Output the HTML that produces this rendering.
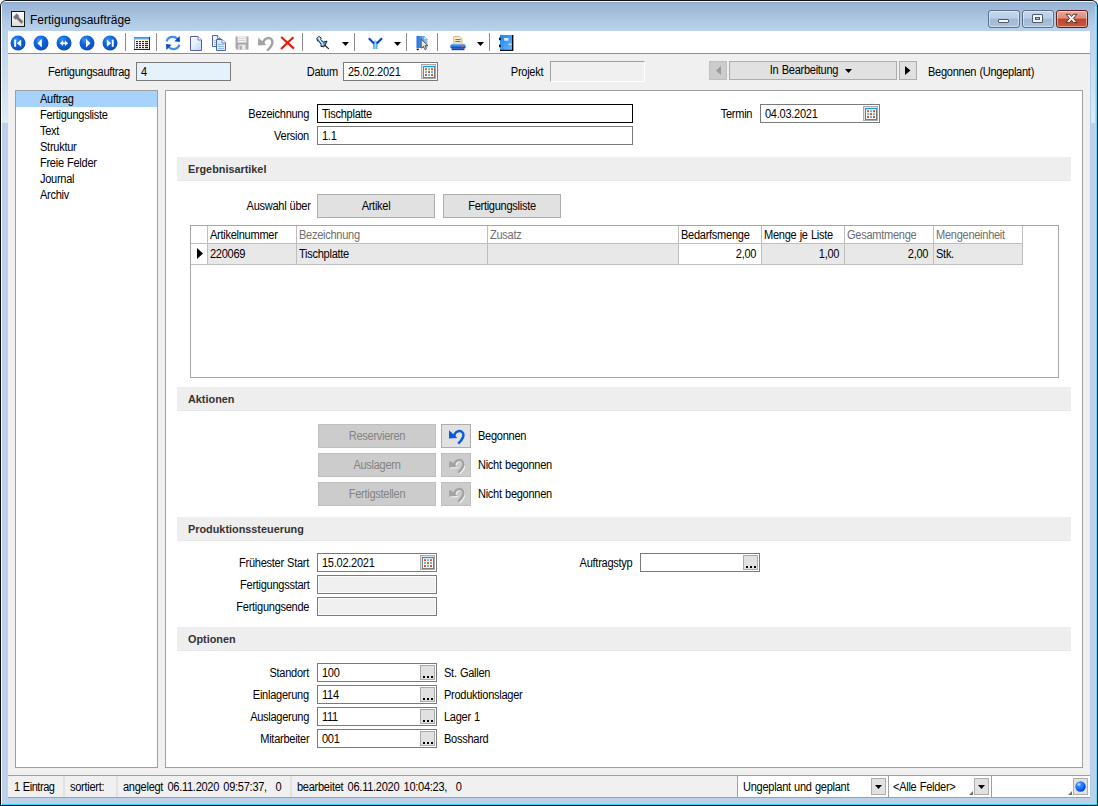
<!DOCTYPE html>
<html>
<head>
<meta charset="utf-8">
<title>Fertigungsaufträge</title>
<style>
*{box-sizing:border-box;margin:0;padding:0}
html,body{width:1098px;height:806px;overflow:hidden;background:#fff}
body{font-family:"Liberation Sans",sans-serif;font-size:11px;color:#000;position:relative}
.win div,.win span,.win svg,.win i{position:absolute}
.win{position:absolute;left:0;top:0;width:1098px;height:806px;background:#bbd2ea;overflow:hidden;border-radius:6px 6px 0 0}
.t{white-space:nowrap;font-size:12px;line-height:12px;letter-spacing:-0.3px;word-spacing:.5px;height:12px;margin-top:.4px;transform:scaleX(.92);transform-origin:0 50%}
.r{text-align:right;transform-origin:100% 50%}
.inp{border:1px solid #7a7a7a;background:#fff;height:19px}
.inp .t{left:4px;top:3px}
.dis{background:#f0f0f0;box-shadow:inset 0 0 0 1px #fbfbfb}
.btn{border:1px solid #adadad;background:#e1e1e1}
.btn .t{left:0;right:0;top:5px;text-align:center;transform-origin:50% 50%}
.btnd{border:1px solid #bfbfbf;background:#cccccc;color:#838383}
.btnd .t{left:0;right:0;top:5px;text-align:center;transform-origin:50% 50%}
.hdr{left:177px;width:894px;height:24px;background:#eee;border-bottom:1px solid #e6e8ea}
.hdr .t{left:11px;top:5px;font-weight:bold;font-size:11.8px;color:#333;letter-spacing:0;line-height:14px;height:14px;transform:scaleX(.92)}
.dots{border:1px solid #a9a9a9;background:#e1e1e1;width:15px;height:15px}
.dots i{bottom:1px;width:2px;height:2px;background:#000}
.cal{width:15px;height:15px;border:1px solid #8e8f8f;background:#ececec}
.sep{top:33px;width:1px;height:18px;background:#8c8c8c}
.gl{background:#bebebe}
</style>
</head>
<body>
<div class="win">
<div style="left:0;top:0;width:1098px;height:31px;background:linear-gradient(#8fabcd 0,#8fabcd 3px,#99b4d5 4px,#9fbad9 9px,#b0c9e4 21px,#bad2ea 31px)"></div>
<div style="left:0;top:31px;width:8px;height:775px;background:#bbd2ea"></div>
<div style="left:1090px;top:31px;width:8px;height:775px;background:#bbd2ea"></div>
<div style="left:0;top:798px;width:1098px;height:8px;background:#bbd2ea"></div>
<div style="left:2px;top:31px;width:6px;height:92px;background:linear-gradient(rgba(255,255,255,0),rgba(255,255,255,.55))"></div>
<div style="left:1091px;top:31px;width:5px;height:92px;background:linear-gradient(rgba(255,255,255,0),rgba(255,255,255,.55))"></div>
<div style="left:1090px;top:31px;width:1px;height:767px;background:#b4ceea"></div>
<div style="left:1095px;top:6px;width:1px;height:798px;background:#c4d1ea"></div>
<div style="left:1096px;top:3px;width:1px;height:802px;background:#55ddff"></div>
<div style="left:1px;top:804px;width:1096px;height:1px;background:#2fd5f2"></div>
<div style="left:1px;top:1px;width:1095px;height:810px;border:1px solid rgba(255,255,255,.92);border-right:0;border-radius:4px 4px 0 0"></div>
<div style="left:0;top:0;width:1098px;height:806px;border:1px solid #111;border-radius:6px 6px 0 0;box-shadow:0 0 0 8px #fff"></div>
<div style="left:8px;top:31px;width:1082px;height:767px;background:#f0f0f0"></div>
<svg style="left:11px;top:11px" width="14" height="16" viewBox="0 0 14 16">
<defs><linearGradient id="ig" x1="0" y1="0" x2="0" y2="1"><stop offset="0" stop-color="#fff"/><stop offset="1" stop-color="#dcdcdc"/></linearGradient></defs>
<rect x="0.5" y="0.5" width="13" height="15" fill="url(#ig)" stroke="#1a1a1a"/>
<path d="M2.4 6 L5.8 2.8 L8 5 L7.3 6 L12 10.6 L10.4 12.4 L5.6 7.8 L4.6 8.4 Z" fill="#757575" stroke="#808080" stroke-width=".7" stroke-linejoin="round"/>
</svg>
<div class="t" style="left:30px;top:11.6px;font-size:12px;line-height:16px;height:16px;letter-spacing:0;transform:none">Fertigungsaufträge</div>
<div style="left:988px;top:10px;width:32px;height:18px;border:1px solid #5a6f8a;border-radius:3px;background:linear-gradient(#c4d7ec 0,#b9cee7 45%,#9fb9d8 50%,#a9c2de 100%);box-shadow:inset 0 0 0 1px rgba(255,255,255,.45)"></div>
<div style="left:1022px;top:10px;width:32px;height:18px;border:1px solid #5a6f8a;border-radius:3px;background:linear-gradient(#c4d7ec 0,#b9cee7 45%,#9fb9d8 50%,#a9c2de 100%);box-shadow:inset 0 0 0 1px rgba(255,255,255,.45)"></div>
<div style="left:1056px;top:10px;width:32px;height:18px;border:1px solid #5c1f22;border-radius:3px;background:linear-gradient(#e9a99a 0,#dc8b79 45%,#c1452a 50%,#c85a3c 100%);box-shadow:inset 0 0 0 1px rgba(255,255,255,.45)"></div>
<div style="left:998px;top:19px;width:11px;height:4px;background:#f4f6f9;border:1px solid #50586a;border-radius:1px"></div>
<div style="left:1032px;top:14px;width:11px;height:9px;background:#f4f6f9;border:1px solid #50586a;border-radius:1px"></div>
<div style="left:1035px;top:17px;width:5px;height:3px;background:#a9bfdb;border:1px solid #50586a"></div>
<svg style="left:1065px;top:13px" width="13" height="11" viewBox="0 0 13 11"><path d="M1 1.3 L4.6 1.3 L6.5 3.5 L8.4 1.3 L12 1.3 L8.5 5.3 L12 9.6 L8.4 9.6 L6.5 7.2 L4.6 9.6 L1 9.6 L4.5 5.3 Z" fill="#f7f7f7" stroke="#4e3436" stroke-width="1" stroke-linejoin="round"/></svg>
<div style="left:8px;top:31px;width:1082px;height:22px;background:#fff"></div>
<div style="left:8px;top:53px;width:1082px;height:1px;background:#8e8e8e"></div>
<svg style="left:0;top:0" width="0" height="0"><defs>
<radialGradient id="ball" cx="0.38" cy="0.3" r="0.75"><stop offset="0" stop-color="#3a93f7"/><stop offset="0.45" stop-color="#0d63dc"/><stop offset="0.85" stop-color="#0a52c4"/><stop offset="1" stop-color="#0a3f9e"/></radialGradient>
</defs></svg>
<svg style="left:9.9px;top:35px" width="16" height="16" viewBox="0 0 16 16"><circle cx="8" cy="8" r="7.5" fill="url(#ball)"/><rect x="4.2" y="4.6" width="1.9" height="7.2" fill="#fff"/><path d="M6.9 8.2 L11.2 4.6 L11.2 11.8 Z" fill="#fff"/></svg>
<svg style="left:32.9px;top:35px" width="16" height="16" viewBox="0 0 16 16"><circle cx="8" cy="8" r="7.5" fill="url(#ball)"/><path d="M4.4 8.2 L8.8 3.8 L8.8 12.6 Z" fill="#fff"/></svg>
<svg style="left:55.9px;top:35px" width="16" height="16" viewBox="0 0 16 16"><circle cx="8" cy="8" r="7.5" fill="url(#ball)"/><path d="M3.8 8.2 L7.1 5.5 L7.1 7.4 L8.9 7.4 L8.9 5.5 L12.2 8.2 L8.9 10.9 L8.9 9 L7.1 9 L7.1 10.9 Z" fill="#fff"/></svg>
<svg style="left:78.9px;top:35px" width="16" height="16" viewBox="0 0 16 16"><circle cx="8" cy="8" r="7.5" fill="url(#ball)"/><path d="M11.4 8.2 L7 3.8 L7 12.6 Z" fill="#fff"/></svg>
<svg style="left:101.9px;top:35px" width="16" height="16" viewBox="0 0 16 16"><circle cx="8" cy="8" r="7.5" fill="url(#ball)"/><rect x="9.8" y="4.6" width="1.9" height="7.2" fill="#fff"/><path d="M9.1 8.2 L4.8 4.6 L4.8 11.8 Z" fill="#fff"/></svg>
<div class="sep" style="left:125px"></div>
<div class="sep" style="left:156px"></div>
<div class="sep" style="left:302px"></div>
<div class="sep" style="left:354px"></div>
<div class="sep" style="left:406px"></div>
<div class="sep" style="left:437px"></div>
<div class="sep" style="left:489px"></div>
<svg style="left:134px;top:37px" width="16" height="13" viewBox="0 0 16 13">
<defs><linearGradient id="gtb" x1="0" y1="0" x2="0" y2="1"><stop offset="0" stop-color="#2487f4"/><stop offset="1" stop-color="#8ec6fb"/></linearGradient></defs>
<rect x="0" y="0" width="16" height="13" fill="#10207a"/>
<rect x="0" y="0" width="1" height="12" fill="#8c8c98"/>
<rect x="1" y="0" width="14" height="12" fill="#fef8dc"/>
<rect x="0" y="0" width="15" height="2.6" fill="url(#gtb)"/>
<rect x="2" y="4" width="2" height="1.15" fill="#0a0af5"/><rect x="5" y="4" width="2" height="1.15" fill="#0a0af5"/><rect x="8" y="4" width="2" height="1.15" fill="#0a0af5"/><rect x="11" y="4" width="3" height="1.15" fill="#0a0af5"/><rect x="2" y="6" width="2" height="1.15" fill="#0a0af5"/><rect x="5" y="6" width="2" height="1.15" fill="#0a0af5"/><rect x="8" y="6" width="2" height="1.15" fill="#0a0af5"/><rect x="11" y="6" width="3" height="1.15" fill="#0a0af5"/><rect x="2" y="8" width="2" height="1.15" fill="#0a0af5"/><rect x="5" y="8" width="2" height="1.15" fill="#0a0af5"/><rect x="8" y="8" width="2" height="1.15" fill="#0a0af5"/><rect x="11" y="8" width="3" height="1.15" fill="#0a0af5"/><rect x="2" y="10" width="2" height="1.15" fill="#0a0af5"/><rect x="5" y="10" width="2" height="1.15" fill="#0a0af5"/><rect x="8" y="10" width="2" height="1.15" fill="#0a0af5"/><rect x="11" y="10" width="3" height="1.15" fill="#0a0af5"/></svg>
<svg style="left:165px;top:35px" width="16" height="16" viewBox="0 0 16 16">
<path d="M1.6 6.4 C2.4 3.4 5 1.9 7.8 1.9 C9.8 1.9 11.3 2.7 12.4 3.9" fill="none" stroke="#3d8ff6" stroke-width="2.2"/>
<path d="M14.7 0.9 L14.9 6.9 L9.4 6.2 Z" fill="#0c48c4"/>
<path d="M14.4 9.6 C13.6 12.6 11 14.1 8.2 14.1 C6.2 14.1 4.7 13.3 3.6 12.1" fill="none" stroke="#3d8ff6" stroke-width="2.2"/>
<path d="M1.3 15.1 L1.1 9.1 L6.6 9.8 Z" fill="#0c48c4"/>
</svg>
<svg style="left:190px;top:36px" width="12" height="15" viewBox="0 0 12 15">
<defs><linearGradient id="docg" x1="0" y1="0" x2="1" y2="1"><stop offset="0" stop-color="#ffffff"/><stop offset="0.5" stop-color="#e1eefc"/><stop offset="1" stop-color="#b9d6f8"/></linearGradient></defs>
<path d="M0.5 0.5 L8 0.5 L11.5 4 L11.5 14.5 L0.5 14.5 Z" fill="url(#docg)" stroke="#5b5ea6"/>
<path d="M8 0.5 L8 4 L11.5 4" fill="#fff" stroke="#5b5ea6" stroke-width=".8"/>
</svg>
<svg style="left:212px;top:35px" width="14" height="16" viewBox="0 0 14 16">
<path d="M0.5 0.5 L5.5 0.5 L8.5 3.5 L8.5 11.5 L0.5 11.5 Z" fill="#eaf3fe" stroke="#4d63a8"/>
<path d="M5.5 0.5 L5.5 3.5 L8.5 3.5" fill="#fff" stroke="#4d63a8" stroke-width=".8"/>
<path d="M2 5.5 H6 M2 7.5 H5 M2 9.5 H5" stroke="#9cc4f4" stroke-width="1"/>
<path d="M4.5 4.5 L10 4.5 L13.5 8 L13.5 15.5 L4.5 15.5 Z" fill="#dcebfd" stroke="#4d63a8"/>
<path d="M10 4.5 L10 8 L13.5 8" fill="#fff" stroke="#4d63a8" stroke-width=".8"/>
<path d="M6 9.5 H12 M6 11.5 H12 M6 13.5 H12" stroke="#8fbdf3" stroke-width="1"/>
</svg>
<svg style="left:235px;top:36px" width="14" height="14" viewBox="0 0 14 14">
<path d="M0.5 0.5 H13.5 V13.5 H1.5 L0.5 12.5 Z" fill="#a9a9a9"/>
<rect x="2.6" y="0.5" width="8.8" height="6" fill="#f4f4f4"/>
<path d="M3.5 2.5 H10.5 M3.5 4.5 H10.5" stroke="#d2d2d2" stroke-width="1"/>
<rect x="3.4" y="8.6" width="7.2" height="4.9" fill="#e9e9e9"/>
<rect x="4.6" y="9.8" width="2.2" height="3.7" fill="#a9a9a9"/>
</svg>
<svg style="left:257px;top:35px" width="17" height="17" viewBox="0 0 17 17">
<path d="M6.2 8.6 C6.4 4.6 9.4 2.7 12 2.9 C15 3.2 16 6.4 15 9.2 C14 11.8 12.2 13.8 10.2 15.6" fill="none" stroke="#a3a3a3" stroke-width="2.5"/>
<path d="M1 2.3 L1 10.5 L9.4 10.1 Z" fill="#a3a3a3"/><rect x="1.2" y="2.6" width="1.3" height="1.8" fill="#d6e4f4"/>
</svg>
<svg style="left:280px;top:36px" width="15" height="14" viewBox="0 0 15 14">
<path d="M1.2 1 L14 12.6 M13.4 1.2 L1 13" stroke="#e51b0a" stroke-width="2.2" stroke-linecap="butt"/>
</svg>
<svg style="left:315px;top:35px" width="15" height="15" viewBox="0 0 15 15">
<path d="M9.6 10 L13.8 13.8" stroke="#111" stroke-width="1.1"/>
<path d="M1.8 3.5 L3.9 1.4 L6.2 3.1 L5.7 4.3 L8.3 7.1 L12.1 6.1 L9 11.8 L5.9 11.4 L6.1 9.2 L3.6 6 L2.6 6.1 Z" fill="#48a4f7" stroke="#111" stroke-width=".9" stroke-linejoin="round"/>
<path d="M3.1 3.6 L4 2.8 L4.9 3.6 L4.4 4.6 L7.2 8 L7.4 10.2" fill="none" stroke="#d6ecff" stroke-width="1.2"/>
</svg>
<svg style="left:342px;top:42px" width="7" height="4" viewBox="0 0 7 4"><path d="M0 0 H7 L3.5 4 Z" fill="#000"/></svg>
<svg style="left:368px;top:37px" width="15" height="12" viewBox="0 0 15 12">
<defs><linearGradient id="fst" x1="0" y1="0" x2="1" y2="0"><stop offset="0" stop-color="#1e90e6"/><stop offset="0.5" stop-color="#9fe0fa"/><stop offset="1" stop-color="#1e90e6"/></linearGradient></defs>
<path d="M5.2 12 V5.5 L7.3 2.4 L9.4 5.5 V12 Z" fill="url(#fst)"/>
<path d="M0.8 1.2 L6 6.6 M14 1.2 L8.8 6.6" stroke="#0a42ba" stroke-width="2.1"/>
</svg>
<svg style="left:394px;top:42px" width="7" height="4" viewBox="0 0 7 4"><path d="M0 0 H7 L3.5 4 Z" fill="#000"/></svg>
<svg style="left:416px;top:36px" width="14" height="15" viewBox="0 0 14 15">
<defs><linearGradient id="dcg" x1="0" y1="0" x2="1" y2="0"><stop offset="0" stop-color="#1d6fe2"/><stop offset="1" stop-color="#9cc6f6"/></linearGradient></defs>
<path d="M0.5 0 L8 0 L11.5 3.5 L11.5 12 L0.5 12 Z" fill="url(#dcg)"/>
<path d="M8 0 L8 3.5 L11.5 3.5 Z" fill="#e8f2fd" stroke="#7f9fd0" stroke-width=".6"/>
<path d="M5.2 3.2 L5.2 12.2 L7.4 10.3 L8.8 13.6 L10.4 12.9 L9 9.7 L11.8 9.5 Z" fill="#f3e9d0" stroke="#3a3a3a" stroke-width=".8" stroke-linejoin="round"/>
<path d="M0 12.8 H3.6 L1.8 14.6 Z" fill="#000"/>
</svg>
<svg style="left:450px;top:36px" width="16" height="15" viewBox="0 0 16 15">
<defs><linearGradient id="prg" x1="0" y1="0" x2="0" y2="1"><stop offset="0" stop-color="#8ec2f8"/><stop offset="0.45" stop-color="#2f86ee"/><stop offset="1" stop-color="#0c3fb0"/></linearGradient></defs>
<path d="M3.8 0.5 H9.6 L12 2.8 V8.4 H3.8 Z" fill="#fbeec4" stroke="#b8a26a" stroke-width=".7"/>
<path d="M5.3 3.6 H10.5 M5.3 5.6 H10.5" stroke="#3c6fd0" stroke-width="1"/>
<path d="M1.6 7.8 H14.4 L15.6 9.4 V12.2 H0.4 V9.4 Z" fill="url(#prg)"/>
<rect x="1.6" y="12.2" width="12.8" height="2" fill="#1646b4"/>
<rect x="11" y="9.7" width="2.6" height="1.1" fill="#f25a1e"/>
</svg>
<svg style="left:477px;top:42px" width="7" height="4" viewBox="0 0 7 4"><path d="M0 0 H7 L3.5 4 Z" fill="#000"/></svg>
<svg style="left:499px;top:35px" width="15" height="16" viewBox="0 0 15 16">
<defs><linearGradient id="bkg" x1="0" y1="0" x2="1" y2="1"><stop offset="0" stop-color="#1a82f2"/><stop offset="1" stop-color="#6ab4f8"/></linearGradient></defs>
<rect x="1" y="0" width="13.4" height="16" fill="#0a0a14"/>
<rect x="1" y="0" width="12" height="14.8" fill="url(#bkg)"/>
<rect x="0" y="2.6" width="1.8" height="2.6" fill="#111"/><rect x="0" y="9.6" width="1.8" height="2.6" fill="#111"/>
<rect x="5.2" y="3" width="4.2" height="2.6" fill="#f4faff"/><rect x="5.8" y="3.6" width="3" height="1.4" fill="#cfe6fb"/>
<rect x="9.6" y="8.6" width="2.8" height="1.2" fill="#f0e6c4"/>
</svg>
<div class="t r" style="right:968.5px;top:66px;">Fertigungsauftrag</div>
<div class="inp " style="left:136px;top:62px;width:95px;height:19px;background:#e5f1fb;border-color:#7a7a7a"><div class="t">4</div></div>
<div class="t r" style="right:760.5px;top:66px;">Datum</div>
<div class="inp " style="left:343px;top:62px;width:95px;height:19px;"><div class="t">25.02.2021</div></div>
<svg style="left:421px;top:64px" width="15" height="15" viewBox="0 0 15 15">
<rect x="0.5" y="0.5" width="14" height="14" fill="#e4e4e4" stroke="#a9a9a9"/>
<rect x="2" y="2" width="12" height="12" fill="#7d7d7d"/>
<rect x="3" y="3" width="10" height="10" fill="#fcfcfc"/>
<rect x="2" y="2" width="12" height="1.2" fill="#1c98d8"/>
<g fill="#e8501e"><rect x="4" y="4.2" width="2" height="2"/><rect x="10" y="4.2" width="2" height="2"/><rect x="7" y="7.1" width="2" height="2"/><rect x="4" y="10" width="2" height="2"/><rect x="10" y="10" width="2" height="2"/></g>
<g fill="#5bbde2"><rect x="7" y="4.2" width="2" height="2"/><rect x="4" y="7.1" width="2" height="2"/><rect x="10" y="7.1" width="2" height="2"/><rect x="7" y="10" width="2" height="2"/></g>
</svg>
<div class="t r" style="right:554.5px;top:66px;">Projekt</div>
<div style="left:550px;top:61px;width:95px;height:21px;background:#f0f0f0;border:1px solid;border-color:#a0a0a0 #fff #fff #a0a0a0"></div>
<div style="left:709px;top:61px;width:18px;height:19px;background:#cccccc;border:1px solid #bfbfbf"></div>
<svg style="left:716px;top:66px" width="5" height="9" viewBox="0 0 5 9"><path d="M5 0 V9 L0 4.5 Z" fill="#9b9b9b"/></svg>
<div class="btn" style="left:729px;top:61px;width:168px;height:19px"><div class="t" style="top:2px;left:0;right:18px">In Bearbeitung</div></div>
<svg style="left:845px;top:69px" width="7" height="4" viewBox="0 0 7 4"><path d="M0 0 H7 L3.5 4 Z" fill="#000"/></svg>
<div class="btn" style="left:899px;top:61px;width:18px;height:19px"></div>
<svg style="left:905px;top:66px" width="5.5" height="9" viewBox="0 0 5.5 9"><path d="M0 0 V9 L5.5 4.5 Z" fill="#000"/></svg>
<div class="t" style="left:928px;top:66px;">Begonnen (Ungeplant)</div>
<div style="left:15px;top:90px;width:143px;height:678px;background:#fff;border:1px solid #a0a0a0"></div>
<div style="left:16px;top:91px;width:141px;height:16px;background:#a6d2fb"></div>
<div class="t" style="left:40px;top:93px;">Auftrag</div>
<div class="t" style="left:40px;top:109px;">Fertigungsliste</div>
<div class="t" style="left:40px;top:125px;">Text</div>
<div class="t" style="left:40px;top:141px;">Struktur</div>
<div class="t" style="left:40px;top:157px;">Freie Felder</div>
<div class="t" style="left:40px;top:173px;">Journal</div>
<div class="t" style="left:40px;top:189px;">Archiv</div>
<div style="left:165px;top:90px;width:918px;height:678px;background:#fff;border:1px solid #a0a0a0"></div>
<div class="t r" style="right:788.8px;top:108px;">Bezeichnung</div>
<div class="inp " style="left:317px;top:104px;width:316px;height:19px;border-color:#000"><div class="t">Tischplatte</div></div>
<div class="t r" style="right:788.8px;top:130px;">Version</div>
<div class="inp " style="left:317px;top:126px;width:316px;height:19px;"><div class="t">1.1</div></div>
<div class="t r" style="right:346.0px;top:108px;">Termin</div>
<div class="inp " style="left:760px;top:104px;width:120px;height:19px;"><div class="t">04.03.2021</div></div>
<svg style="left:863px;top:106px" width="15" height="15" viewBox="0 0 15 15">
<rect x="0.5" y="0.5" width="14" height="14" fill="#e4e4e4" stroke="#a9a9a9"/>
<rect x="2" y="2" width="12" height="12" fill="#7d7d7d"/>
<rect x="3" y="3" width="10" height="10" fill="#fcfcfc"/>
<rect x="2" y="2" width="12" height="1.2" fill="#1c98d8"/>
<g fill="#e8501e"><rect x="4" y="4.2" width="2" height="2"/><rect x="10" y="4.2" width="2" height="2"/><rect x="7" y="7.1" width="2" height="2"/><rect x="4" y="10" width="2" height="2"/><rect x="10" y="10" width="2" height="2"/></g>
<g fill="#5bbde2"><rect x="7" y="4.2" width="2" height="2"/><rect x="4" y="7.1" width="2" height="2"/><rect x="10" y="7.1" width="2" height="2"/><rect x="7" y="10" width="2" height="2"/></g>
</svg>
<div class="hdr" style="top:157px"><div class="t">Ergebnisartikel</div></div>
<div class="t r" style="right:787.4px;top:200px;">Auswahl über</div>
<div class="btn" style="left:317px;top:194px;width:118px;height:24px"><div class="t">Artikel</div></div>
<div class="btn" style="left:443px;top:194px;width:118px;height:24px"><div class="t">Fertigungsliste</div></div>
<div style="left:190px;top:225px;width:869px;height:153px;background:#fff;border:1px solid #a6a6a6"></div>
<div style="left:207px;top:244px;width:815px;height:20px;background:#e8e8e8"></div>
<div style="left:679px;top:244px;width:82px;height:20px;background:#fff"></div>
<div class="gl" style="left:191px;top:243px;width:832px;height:1px"></div>
<div class="gl" style="left:191px;top:264px;width:832px;height:1px"></div>
<div class="gl" style="left:207px;top:226px;width:1px;height:39px"></div>
<div class="gl" style="left:296px;top:226px;width:1px;height:39px"></div>
<div class="gl" style="left:487px;top:226px;width:1px;height:39px"></div>
<div class="gl" style="left:678px;top:226px;width:1px;height:39px"></div>
<div class="gl" style="left:761px;top:226px;width:1px;height:39px"></div>
<div class="gl" style="left:844px;top:226px;width:1px;height:39px"></div>
<div class="gl" style="left:933px;top:226px;width:1px;height:39px"></div>
<div class="gl" style="left:1022px;top:226px;width:1px;height:39px"></div>
<div class="t" style="left:210px;top:229px;color:#000">Artikelnummer</div>
<div class="t" style="left:299px;top:229px;color:#6d6d6d">Bezeichnung</div>
<div class="t" style="left:490px;top:229px;color:#6d6d6d">Zusatz</div>
<div class="t" style="left:681px;top:229px;color:#000">Bedarfsmenge</div>
<div class="t" style="left:764px;top:229px;color:#000">Menge je Liste</div>
<div class="t" style="left:847px;top:229px;color:#6d6d6d">Gesamtmenge</div>
<div class="t" style="left:936px;top:229px;color:#6d6d6d">Mengeneinheit</div>
<svg style="left:197px;top:248px" width="6" height="11" viewBox="0 0 6 11"><path d="M0 0 V11 L6 5.5 Z" fill="#000"/></svg>
<div class="t" style="left:210px;top:248px;">220069</div>
<div class="t" style="left:299px;top:248px;">Tischplatte</div>
<div class="t r" style="right:342.0px;top:248px;">2,00</div>
<div class="t r" style="right:259.0px;top:248px;">1,00</div>
<div class="t r" style="right:170.0px;top:248px;">2,00</div>
<div class="t" style="left:936px;top:248px;">Stk.</div>
<div class="hdr" style="top:387px"><div class="t">Aktionen</div></div>
<div class="btnd" style="left:318px;top:424px;width:118px;height:24px"><div class="t">Reservieren</div></div>
<div class="btn" style="left:441px;top:424px;width:30px;height:24px"></div>
<svg style="left:448px;top:428px" width="17" height="17" viewBox="0 0 17 17">
<path d="M6.2 8.6 C6.4 4.6 9.4 2.7 12 2.9 C15 3.2 16 6.4 15 9.2 C14 11.8 12.2 13.8 10.2 15.6" fill="none" stroke="#0b5bd6" stroke-width="2.5"/>
<path d="M1 2.3 L1 10.5 L9.4 10.1 Z" fill="#0b5bd6"/>
</svg>
<div class="t" style="left:478px;top:430px;">Begonnen</div>
<div class="btnd" style="left:318px;top:453px;width:118px;height:24px"><div class="t">Auslagern</div></div>
<div class="btnd" style="left:441px;top:453px;width:30px;height:24px"></div>
<svg style="left:448px;top:457px" width="17" height="17" viewBox="0 0 17 17"><g transform="translate(1,1)"><path d="M6.2 8.6 C6.4 4.6 9.4 2.7 12 2.9 C15 3.2 16 6.4 15 9.2 C14 11.8 12.2 13.8 10.2 15.6" fill="none" stroke="#f4f4f4" stroke-width="2.2"/><path d="M1 2.3 L1 10.5 L9.4 10.1 Z" fill="#f4f4f4"/></g>
<path d="M6.2 8.6 C6.4 4.6 9.4 2.7 12 2.9 C15 3.2 16 6.4 15 9.2 C14 11.8 12.2 13.8 10.2 15.6" fill="none" stroke="#a3a3a3" stroke-width="2.5"/>
<path d="M1 2.3 L1 10.5 L9.4 10.1 Z" fill="#a3a3a3"/><rect x="1.2" y="2.6" width="1.3" height="1.8" fill="#c9dcf2"/>
</svg>
<div class="t" style="left:478px;top:459px;">Nicht begonnen</div>
<div class="btnd" style="left:318px;top:482px;width:118px;height:24px"><div class="t">Fertigstellen</div></div>
<div class="btnd" style="left:441px;top:482px;width:30px;height:24px"></div>
<svg style="left:448px;top:486px" width="17" height="17" viewBox="0 0 17 17"><g transform="translate(1,1)"><path d="M6.2 8.6 C6.4 4.6 9.4 2.7 12 2.9 C15 3.2 16 6.4 15 9.2 C14 11.8 12.2 13.8 10.2 15.6" fill="none" stroke="#f4f4f4" stroke-width="2.2"/><path d="M1 2.3 L1 10.5 L9.4 10.1 Z" fill="#f4f4f4"/></g>
<path d="M6.2 8.6 C6.4 4.6 9.4 2.7 12 2.9 C15 3.2 16 6.4 15 9.2 C14 11.8 12.2 13.8 10.2 15.6" fill="none" stroke="#a3a3a3" stroke-width="2.5"/>
<path d="M1 2.3 L1 10.5 L9.4 10.1 Z" fill="#a3a3a3"/><rect x="1.2" y="2.6" width="1.3" height="1.8" fill="#c9dcf2"/>
</svg>
<div class="t" style="left:478px;top:488px;">Nicht begonnen</div>
<div class="hdr" style="top:517px"><div class="t">Produktionssteuerung</div></div>
<div class="t r" style="right:788.8px;top:557px;">Frühester Start</div>
<div class="inp " style="left:317px;top:553px;width:120px;height:19px;"><div class="t">15.02.2021</div></div>
<svg style="left:420px;top:555px" width="15" height="15" viewBox="0 0 15 15">
<rect x="0.5" y="0.5" width="14" height="14" fill="#e4e4e4" stroke="#a9a9a9"/>
<rect x="2" y="2" width="12" height="12" fill="#7d7d7d"/>
<rect x="3" y="3" width="10" height="10" fill="#fcfcfc"/>
<rect x="2" y="2" width="12" height="1.2" fill="#1c98d8"/>
<g fill="#e8501e"><rect x="4" y="4.2" width="2" height="2"/><rect x="10" y="4.2" width="2" height="2"/><rect x="7" y="7.1" width="2" height="2"/><rect x="4" y="10" width="2" height="2"/><rect x="10" y="10" width="2" height="2"/></g>
<g fill="#5bbde2"><rect x="7" y="4.2" width="2" height="2"/><rect x="4" y="7.1" width="2" height="2"/><rect x="10" y="7.1" width="2" height="2"/><rect x="7" y="10" width="2" height="2"/></g>
</svg>
<div class="t r" style="right:788.8px;top:579px;">Fertigungsstart</div>
<div class="inp dis" style="left:317px;top:575px;width:120px;height:19px;"><div class="t"></div></div>
<div class="t r" style="right:788.8px;top:601px;">Fertigungsende</div>
<div class="inp dis" style="left:317px;top:597px;width:120px;height:19px;"><div class="t"></div></div>
<div class="t r" style="right:466.0px;top:557px;">Auftragstyp</div>
<div class="inp " style="left:640px;top:553px;width:120px;height:19px;"><div class="t"></div></div>
<div class="dots" style="left:743px;top:555px"><i style="left:2px"></i><i style="left:6px"></i><i style="left:10px"></i></div>
<div class="hdr" style="top:627px"><div class="t">Optionen</div></div>
<div class="t r" style="right:788.8px;top:667px;">Standort</div>
<div class="inp " style="left:317px;top:663px;width:120px;height:19px;"><div class="t">100</div></div>
<div class="dots" style="left:420px;top:665px"><i style="left:2px"></i><i style="left:6px"></i><i style="left:10px"></i></div>
<div class="t" style="left:444px;top:667px;">St. Gallen</div>
<div class="t r" style="right:788.8px;top:689px;">Einlagerung</div>
<div class="inp " style="left:317px;top:685px;width:120px;height:19px;"><div class="t">114</div></div>
<div class="dots" style="left:420px;top:687px"><i style="left:2px"></i><i style="left:6px"></i><i style="left:10px"></i></div>
<div class="t" style="left:444px;top:689px;">Produktionslager</div>
<div class="t r" style="right:788.8px;top:711px;">Auslagerung</div>
<div class="inp " style="left:317px;top:707px;width:120px;height:19px;"><div class="t">111</div></div>
<div class="dots" style="left:420px;top:709px"><i style="left:2px"></i><i style="left:6px"></i><i style="left:10px"></i></div>
<div class="t" style="left:444px;top:711px;">Lager 1</div>
<div class="t r" style="right:788.8px;top:733px;">Mitarbeiter</div>
<div class="inp " style="left:317px;top:729px;width:120px;height:19px;"><div class="t">001</div></div>
<div class="dots" style="left:420px;top:731px"><i style="left:2px"></i><i style="left:6px"></i><i style="left:10px"></i></div>
<div class="t" style="left:444px;top:733px;">Bosshard</div>
<div style="left:8px;top:775px;width:1082px;height:1px;background:#a0a0a0"></div>
<div style="left:8px;top:797px;width:1082px;height:1px;background:#a0a0a0"></div>
<div class="t" style="left:14px;top:781px;letter-spacing:-.5px">1 Eintrag</div>
<div class="t" style="left:70px;top:781px;">sortiert:</div>
<div class="t" style="left:123px;top:781px;word-spacing:1.6px">angelegt 06.11.2020 09:57:37,&nbsp; 0</div>
<div class="t" style="left:297px;top:781px;word-spacing:1.6px">bearbeitet 06.11.2020 10:04:23,&nbsp; 0</div>
<div style="left:63px;top:776px;width:2px;height:21px;background:#e2e2e2"></div>
<div style="left:116px;top:776px;width:2px;height:21px;background:#e2e2e2"></div>
<div style="left:290px;top:776px;width:2px;height:21px;background:#e2e2e2"></div>
<div style="left:737px;top:776px;width:353px;height:21px;background:#fff"></div>
<div style="left:737px;top:776px;width:1px;height:21px;background:#a0a0a0"></div>
<div style="left:888px;top:776px;width:1px;height:21px;background:#a0a0a0"></div>
<div style="left:991px;top:776px;width:1px;height:21px;background:#a0a0a0"></div>
<div class="t" style="left:743px;top:781px;">Ungeplant und geplant</div>
<div class="t" style="left:893px;top:781px;">&lt;Alle Felder&gt;</div>
<div class="btn" style="left:871px;top:778px;width:15px;height:17px"></div>
<svg style="left:875px;top:785px" width="7" height="4" viewBox="0 0 7 4"><path d="M0 0 H7 L3.5 4 Z" fill="#000"/></svg>
<div class="btn" style="left:974px;top:778px;width:15px;height:17px"></div>
<svg style="left:978px;top:785px" width="7" height="4" viewBox="0 0 7 4"><path d="M0 0 H7 L3.5 4 Z" fill="#000"/></svg>
<svg style="left:969px;top:791px" width="4" height="4" viewBox="0 0 4 4"><path d="M4 0 V4 H0 Z" fill="#6e6e6e"/></svg>
<svg style="left:1068px;top:791px" width="4" height="4" viewBox="0 0 4 4"><path d="M4 0 V4 H0 Z" fill="#6e6e6e"/></svg>
<div class="btn" style="left:1073px;top:778px;width:15px;height:17px"></div>
<svg style="left:1075px;top:781px" width="11" height="11" viewBox="0 0 11 11">
<defs><radialGradient id="sb" cx="0.35" cy="0.3" r="0.8"><stop offset="0" stop-color="#cfe6ff"/><stop offset="0.25" stop-color="#3d8cff"/><stop offset="0.7" stop-color="#0a5cf5"/><stop offset="1" stop-color="#0838c8"/></radialGradient></defs>
<circle cx="5.5" cy="5.5" r="5.2" fill="url(#sb)"/></svg>
</div>
</body>
</html>
